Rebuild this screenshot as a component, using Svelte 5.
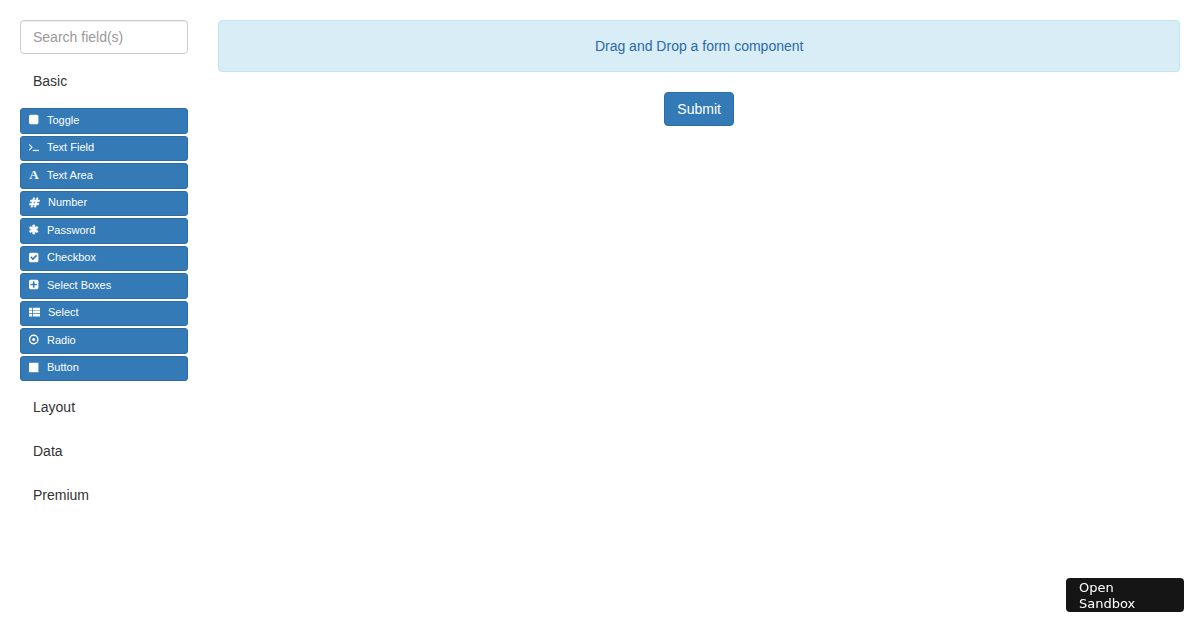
<script lang="ts">
  type Field = { label: string; icon: string };

  const fields: Field[] = [
    { label: 'Toggle', icon: 'square' },
    { label: 'Text Field', icon: 'terminal' },
    { label: 'Text Area', icon: 'font' },
    { label: 'Number', icon: 'hashtag' },
    { label: 'Password', icon: 'asterisk' },
    { label: 'Checkbox', icon: 'check' },
    { label: 'Select Boxes', icon: 'plus' },
    { label: 'Select', icon: 'list' },
    { label: 'Radio', icon: 'radio' },
    { label: 'Button', icon: 'stop' }
  ];

  const groups = ['Basic', 'Layout', 'Data', 'Premium'];

  const wide = ['hashtag', 'list'];
  const bold = ['terminal', 'hashtag', 'asterisk'];
  const box = 'M1664 416v960q0 119-84.5 203.5t-203.5 84.5h-960q-119 0-203.5-84.5t-84.5-203.5v-960q0-119 84.5-203.5t203.5-84.5h960q119 0 203.5 84.5t84.5 203.5z';

  const paths: Record<string, string> = {
    square: box,
    stop: 'M128 128h1536v1536h-1536z',
    terminal: 'M649 883l-466 466q-10 10-23 10t-23-10l-50-50q-10-10-10-23t10-23l393-393-393-393q-10-10-10-23t10-23l50-50q10-10 23-10t23 10l466 466q10 10 10 23t-10 23zm1079 457v64q0 14-9 23t-23 9h-960q-14 0-23-9t-9-23v-64q0-14 9-23t23-9h960q14 0 23 9t9 23z',
    hashtag: 'M991 1024l64-256h-254l-64 256h254zm768-504l-56 224q-7 24-31 24h-327l-64 256h311q15 0 25 12 10 14 6 28l-56 224q-5 24-31 24h-327l-81 328q-7 24-31 24h-224q-16 0-26-12-9-12-6-28l78-312h-254l-81 328q-7 24-31 24h-225q-15 0-25-12-9-12-6-28l78-312h-311q-15 0-25-12-9-12-6-28l56-224q7-24 31-24h327l64-256h-311q-15 0-25-12-10-14-6-28l56-224q5-24 31-24h327l81-328q7-24 32-24h224q15 0 25 12 9 12 6 28l-78 312h254l81-328q7-24 32-24h224q15 0 25 12 9 12 6 28l-78 312h311q15 0 25 12 9 12 6 28z',
    asterisk: 'M1546 1050q46 26 59.5 77.5t-12.5 97.5l-64 110q-26 46-77.5 59.5t-97.5-12.5l-266-153v307q0 52-38 90t-90 38h-128q-52 0-90-38t-38-90v-307l-266 153q-46 26-97.5 12.5t-77.5-59.5l-64-110q-26-46-12.5-97.5t59.5-77.5l266-154-266-154q-46-26-59.5-77.5t12.5-97.5l64-110q26-46 77.5-59.5t97.5 12.5l266 153v-307q0-52 38-90t90-38h128q52 0 90 38t38 90v307l266-153q46-26 97.5-12.5t77.5 59.5l64 110q26 46 12.5 97.5t-59.5 77.5l-266 154z',
    check: box + 'M813 1299l614-614q19-19 19-45t-19-45l-102-102q-19-19-45-19t-45 19l-467 467-211-211q-19-19-45-19t-45 19l-102 102q-19 19-19 45t19 45l358 358q19 19 45 19t45-19z',
    plus: box + 'M1408 960v-128q0-26-19-45t-45-19h-320v-320q0-26-19-45t-45-19h-128q-26 0-45 19t-19 45v320h-320q-26 0-45 19t-19 45v128q0 26 19 45t45 19h320v320q0 26 19 45t45 19h128q26 0 45-19t19-45v-320h320q26 0 45-19t19-45z',
    list: 'M0 130h520v400h-520zM652 130h1140v400h-1140zM0 630h520v400h-520zM652 630h1140v400h-1140zM0 1130h520v400h-520zM652 1130h1140v400h-1140z'
  };

  function viewBox(icon: string): string {
    if (wide.includes(icon)) return '0 0 1792 1792';
    return `${icon === 'terminal' ? 80 : 128} 0 1629 1792`;
  }

  let search = $state('');
  let open = $state('Basic');

  const visible = $derived(
    fields.filter(f => f.label.toLowerCase().includes(search.toLowerCase()))
  );
</script>

<div class="builder">
  <aside class="sidebar">
    <input class="search" type="search" placeholder="Search field(s)" aria-label="Search field(s)" bind:value={search} />

    {#each groups as group}
      <button class="group-title" type="button" aria-expanded={open === group} onclick={() => (open = group)}>
        {group}
      </button>
      {#if group === 'Basic' && open === group}
        <div class="components">
          {#each visible as field}
            <button class="component" type="button" draggable="true">
              {#if field.icon === 'font'}
                <span class="icon letter" aria-hidden="true">A</span>
              {:else}
                <svg
                  class="icon"
                  class:wide={wide.includes(field.icon)}
                  class:bold={bold.includes(field.icon)}
                  viewBox={viewBox(field.icon)}
                  aria-hidden="true"
                >
                  {#if field.icon === 'radio'}
                    <circle cx="896" cy="896" r="680" fill="none" stroke="currentColor" stroke-width="230" />
                    <circle cx="896" cy="896" r="250" />
                  {:else}
                    <path fill-rule="evenodd" d={paths[field.icon]} />
                  {/if}
                </svg>
              {/if}
              <span>{field.label}</span>
            </button>
          {/each}
        </div>
      {/if}
    {/each}
  </aside>

  <main class="form-area">
    <div class="drop-zone">Drag and Drop a form component</div>
    <button class="submit" type="button">Submit</button>
  </main>
</div>

<a class="sandbox" href="#sandbox">Open Sandbox</a>

<style>
:global(body) {
  background: #fff;
}

.builder {
  display: grid;
  grid-template-columns: repeat(12, 1fr);
  column-gap: 30px;
  padding: 20px;
  font-family: "Helvetica Neue", Helvetica, "Liberation Sans", Arial, sans-serif;
  font-size: 14px;
  line-height: 20px;
  color: #333;
}

button,
input {
  box-sizing: border-box;
  margin: 0;
  font: inherit;
}

button {
  cursor: pointer;
}

.sidebar {
  grid-column: span 2;
  display: flex;
  flex-direction: column;
}

.search {
  width: 100%;
  height: 34px;
  margin-bottom: 5px;
  padding: 6px 12px;
  border: 1px solid #ccc;
  border-radius: 4px;
  box-shadow: inset 0 1px 1px rgba(0, 0, 0, 0.075);
  color: #555;
  appearance: none;
}

.search::placeholder {
  color: #999;
  opacity: 1;
}

.group-title {
  padding: 12px 13px;
  border: 0;
  background: none;
  color: #333;
  text-align: left;
}

.components {
  display: grid;
  grid-auto-rows: 1fr;
  gap: 2px;
  min-height: 273px;
  padding: 5px 0 4px;
}

.component {
  display: flex;
  align-items: center;
  gap: 8px;
  padding: 0 8px 2px;
  border: 1px solid #2e6da4;
  border-radius: 3px;
  background: #337ab7;
  color: #fff;
  font-size: 11px;
  line-height: 16px;
}

.icon {
  flex: none;
  width: 10px;
  height: 11px;
  fill: currentColor;
}

.icon.wide {
  width: 11px;
}

.icon.bold {
  stroke: currentColor;
  stroke-width: 60;
}

.letter {
  font-family: "Liberation Serif", serif;
  font-size: 13px;
  font-weight: 700;
  line-height: 11px;
  text-align: center;
}

.form-area {
  grid-column: span 10;
  display: flex;
  flex-direction: column;
  align-items: center;
  gap: 20px;
}

.drop-zone {
  box-sizing: border-box;
  width: 100%;
  padding: 15px;
  border: 1px solid #bce8f1;
  border-radius: 4px;
  background: #d9edf7;
  color: #2a6aa8;
  text-align: center;
}

.submit {
  padding: 6px 12px;
  border: 1px solid #2e6da4;
  border-radius: 4px;
  background: #337ab7;
  color: #fff;
}

.sandbox {
  position: fixed;
  right: 16px;
  bottom: 18px;
  box-sizing: border-box;
  width: 118px;
  padding: 2px 13px 0;
  border-radius: 4px;
  background: #151515;
  color: #fff;
  font-family: Verdana, "DejaVu Sans", sans-serif;
  font-size: 13px;
  line-height: 16px;
  text-decoration: none;
}
</style>
